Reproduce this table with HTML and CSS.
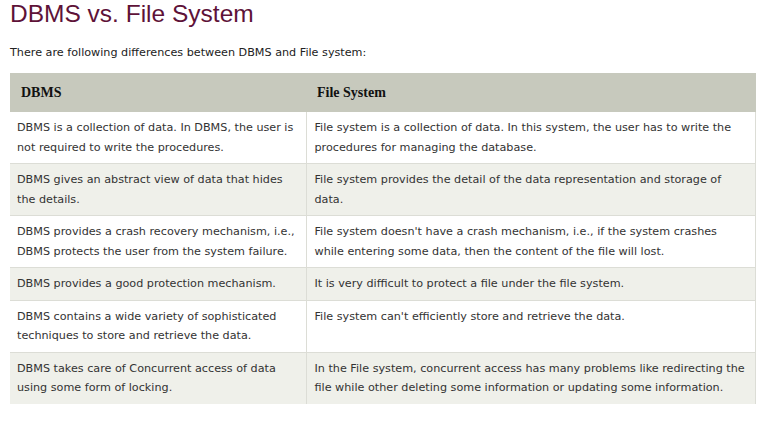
FILE: index.html
```html
<!DOCTYPE html>
<html lang="en">
<head>
<meta charset="utf-8">
<title>DBMS vs. File System</title>
<link rel="stylesheet" href="styles.css">
</head>
<body>
<main class="page">
  <h1 class="title">DBMS vs. File System</h1>
  <p class="intro">There are following differences between DBMS and File system:</p>
  <table class="compare">
    <thead>
      <tr><th class="c1">DBMS</th><th class="c2">File System</th></tr>
    </thead>
    <tbody>
      <tr><td>DBMS is a collection of data. In DBMS, the user is not required to write the procedures.</td><td>File system is a collection of data. In this system, the user has to write the procedures for managing the database.</td></tr>
      <tr><td>DBMS gives an abstract view of data that hides the details.</td><td>File system provides the detail of the data representation and storage of data.</td></tr>
      <tr><td>DBMS provides a crash recovery mechanism, i.e., DBMS protects the user from the system failure.</td><td>File system doesn't have a crash mechanism, i.e., if the system crashes while entering some data, then the content of the file will lost.</td></tr>
      <tr><td>DBMS provides a good protection mechanism.</td><td>It is very difficult to protect a file under the file system.</td></tr>
      <tr><td>DBMS contains a wide variety of sophisticated techniques to store and retrieve the data.</td><td>File system can't efficiently store and retrieve the data.</td></tr>
      <tr><td>DBMS takes care of Concurrent access of data using some form of locking.</td><td>In the File system, concurrent access has many problems like redirecting the file while other deleting some information or updating some information.</td></tr>
    </tbody>
  </table>
</main>
</body>
</html>
```

FILE: styles.css
```css
html, body {
  margin: 0;
  padding: 0;
  background: #ffffff;
}

.page {
  padding: 0 10px;
}

.title {
  margin: 0;
  padding-top: 0;
  font-family: "Liberation Sans", Arial, sans-serif;
  font-weight: normal;
  font-size: 24.5px;
  line-height: 28px;
  color: #5e1238;
}

.intro {
  margin: 16px 0 0 0;
  font-family: "DejaVu Sans", Verdana, sans-serif;
  font-size: 11.2px;
  line-height: 18px;
  color: #222222;
}

.compare {
  margin-top: 11px;
  width: 746px;
  border-collapse: collapse;
  font-family: "DejaVu Sans", Verdana, sans-serif;
  font-size: 11.2px;
  line-height: 19.5px;
  color: #333333;
}

.compare th {
  background: #c7c9bd;
  text-align: left;
  font-family: "Liberation Serif", "Times New Roman", serif;
  font-weight: bold;
  font-size: 14px;
  color: #111111;
  height: 39px;
  padding: 0 11px;
  box-sizing: border-box;
}

.compare th.c1 {
  width: 296px;
}

.compare td {
  vertical-align: top;
  padding: 6px 4px 6px 7px;
  border-bottom: 1px solid #dcddd6;
  border-right: 1px solid #dcddd6;
}

.compare td + td {
  padding-left: 8px;
  padding-right: 8px;
}

.compare tbody tr:nth-child(even) td {
  background: #eff0ea;
}

.compare tbody tr:last-child td {
  border-bottom: none;
}
```
